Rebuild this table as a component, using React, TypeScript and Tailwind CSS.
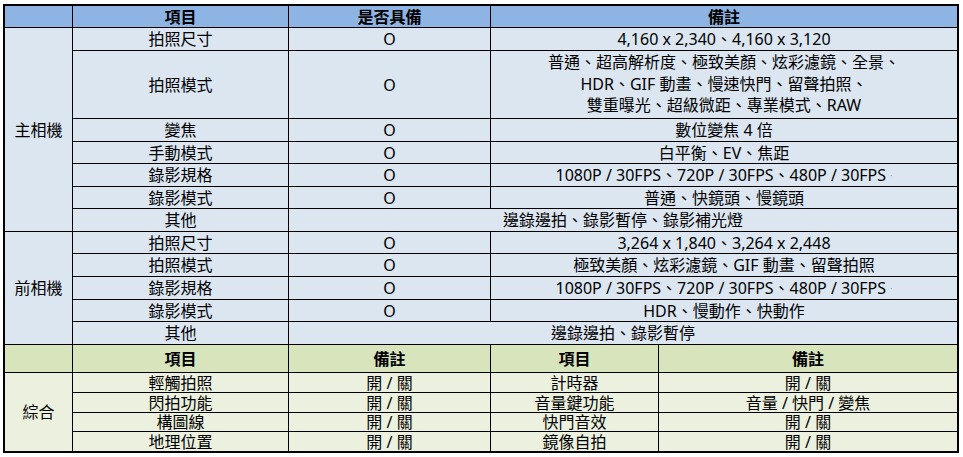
import React from "react";

type Cell = {
  text: React.ReactNode;
  span?: string;
  bg: string;
  bold?: boolean;
};

const HEAD = "bg-[#8db4e2]";
const BODY = "bg-[#dce6f1]";
const GHEAD = "bg-[#d8e4bc]";
const GBODY = "bg-[#ebf1de]";

const fpsLine = (
  <>
    1080P / 30FPS、720P / 30FPS、480P / 30FPS
    <span className="ml-[4px] text-[9px] text-gray-400">·</span>
  </>
);

const cells: Cell[] = [
  // header
  { text: "", bg: HEAD },
  { text: "項目", bg: HEAD, bold: true },
  { text: "是否具備", bg: HEAD, bold: true },
  { text: "備註", bg: HEAD, bold: true, span: "col-span-2" },

  // 主相機
  { text: "主相機", bg: BODY, span: "row-span-7" },
  { text: "拍照尺寸", bg: BODY },
  { text: "O", bg: BODY },
  { text: "4,160 x 2,340、4,160 x 3,120", bg: BODY, span: "col-span-2" },

  { text: "拍照模式", bg: BODY },
  { text: "O", bg: BODY },
  {
    text: (
      <span className="leading-[21.5px]">
        普通、超高解析度、極致美顏、炫彩濾鏡、全景、
        <br />
        HDR、GIF 動畫、慢速快門、留聲拍照、
        <br />
        雙重曝光、超級微距、專業模式、RAW
      </span>
    ),
    bg: BODY,
    span: "col-span-2",
  },

  { text: "變焦", bg: BODY },
  { text: "O", bg: BODY },
  { text: "數位變焦 4 倍", bg: BODY, span: "col-span-2" },

  { text: "手動模式", bg: BODY },
  { text: "O", bg: BODY },
  { text: "白平衡、EV、焦距", bg: BODY, span: "col-span-2" },

  { text: "錄影規格", bg: BODY },
  { text: "O", bg: BODY },
  { text: fpsLine, bg: BODY, span: "col-span-2" },

  { text: "錄影模式", bg: BODY },
  { text: "O", bg: BODY },
  { text: "普通、快鏡頭、慢鏡頭", bg: BODY, span: "col-span-2" },

  { text: "其他", bg: BODY },
  { text: "邊錄邊拍、錄影暫停、錄影補光燈", bg: BODY, span: "col-span-3" },

  // 前相機
  { text: "前相機", bg: BODY, span: "row-span-5" },
  { text: "拍照尺寸", bg: BODY },
  { text: "O", bg: BODY },
  { text: "3,264 x 1,840、3,264 x 2,448", bg: BODY, span: "col-span-2" },

  { text: "拍照模式", bg: BODY },
  { text: "O", bg: BODY },
  { text: "極致美顏、炫彩濾鏡、GIF 動畫、留聲拍照", bg: BODY, span: "col-span-2" },

  { text: "錄影規格", bg: BODY },
  { text: "O", bg: BODY },
  { text: fpsLine, bg: BODY, span: "col-span-2" },

  { text: "錄影模式", bg: BODY },
  { text: "O", bg: BODY },
  { text: "HDR、慢動作、快動作", bg: BODY, span: "col-span-2" },

  { text: "其他", bg: BODY },
  { text: "邊錄邊拍、錄影暫停", bg: BODY, span: "col-span-3" },

  // 綜合 header
  { text: "", bg: GHEAD },
  { text: "項目", bg: GHEAD, bold: true },
  { text: "備註", bg: GHEAD, bold: true },
  { text: "項目", bg: GHEAD, bold: true },
  { text: "備註", bg: GHEAD, bold: true },

  { text: "綜合", bg: GBODY, span: "row-span-4" },
  { text: "輕觸拍照", bg: GBODY },
  { text: "開 / 關", bg: GBODY },
  { text: "計時器", bg: GBODY },
  { text: "開 / 關", bg: GBODY },

  { text: "閃拍功能", bg: GBODY },
  { text: "開 / 關", bg: GBODY },
  { text: "音量鍵功能", bg: GBODY },
  { text: "音量 / 快門 / 變焦", bg: GBODY },

  { text: "構圖線", bg: GBODY },
  { text: "開 / 關", bg: GBODY },
  { text: "快門音效", bg: GBODY },
  { text: "開 / 關", bg: GBODY },

  { text: "地理位置", bg: GBODY },
  { text: "開 / 關", bg: GBODY },
  { text: "鏡像自拍", bg: GBODY },
  { text: "開 / 關", bg: GBODY },
];

export default function App() {
  return (
    <div
      className="w-[963px] h-[457px] bg-white pt-[4px] pl-[3px] text-black text-[16px]"
      style={{ fontFamily: '"Noto Sans", "Noto Sans CJK TC", sans-serif' }}
    >
      <div className="grid w-fit gap-px border-2 border-black bg-black grid-cols-[67px_215px_201px_167px_298px] grid-rows-[21px_22px_67px_22px_21px_22px_21px_22px_21px_22px_22px_21px_22px_27px_19px_19px_18px_19px]">
        {cells.map((c, i) => (
          <div
            key={i}
            className={`flex items-center justify-center text-center leading-none whitespace-nowrap ${c.bg} ${c.span ?? ""} ${c.bold ? "font-bold" : ""}`}
          >
            {c.text}
          </div>
        ))}
      </div>
    </div>
  );
}
